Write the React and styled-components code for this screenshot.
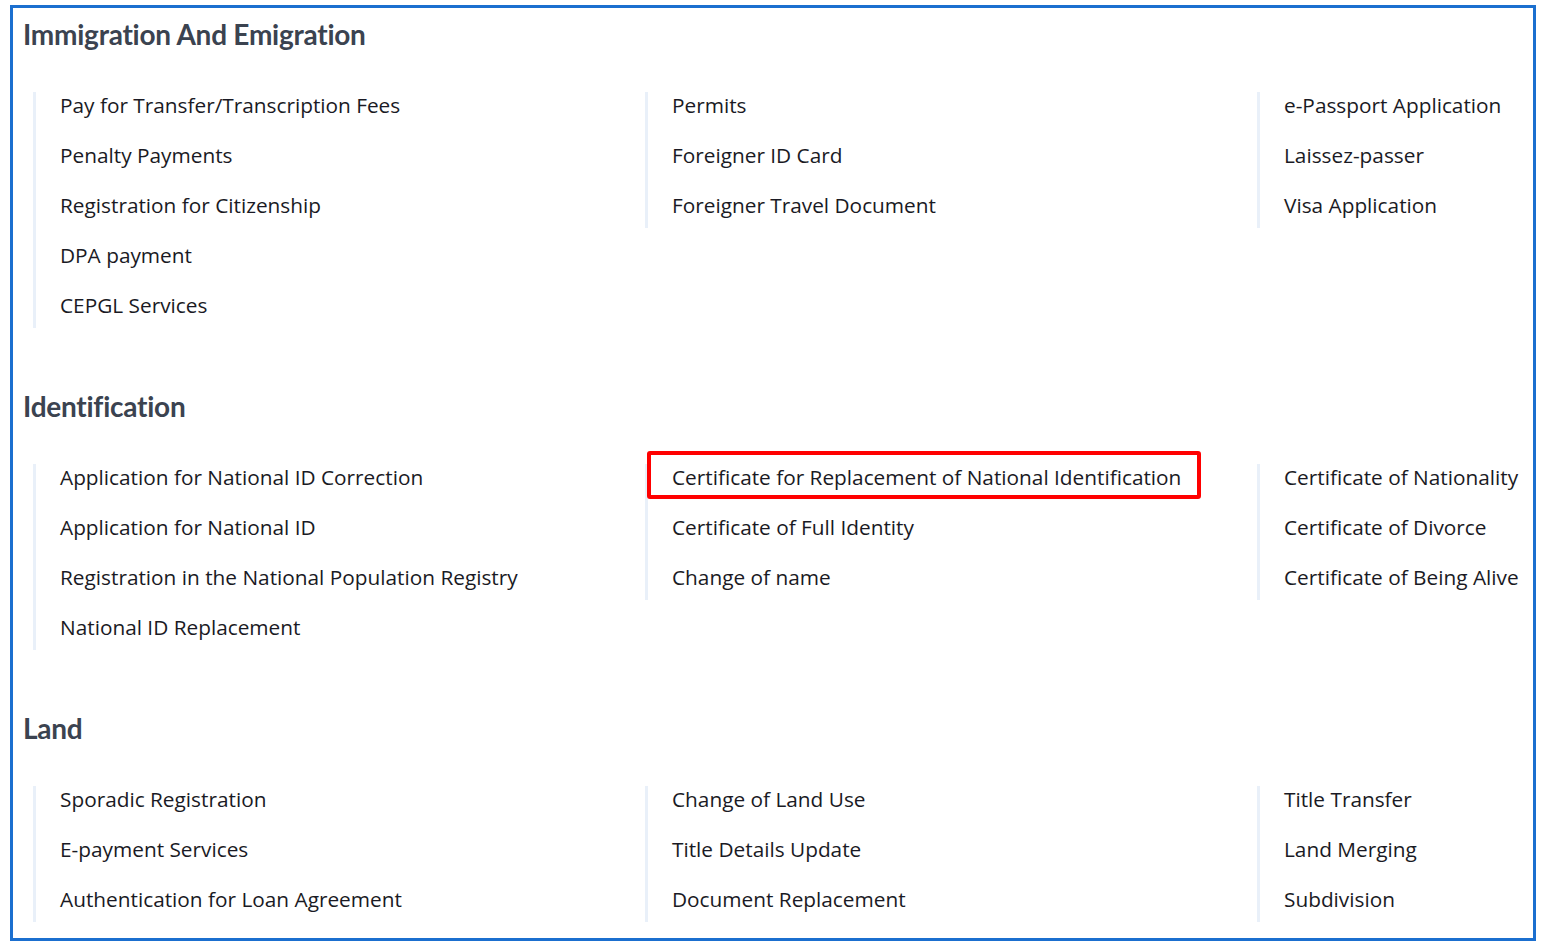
import styled, { createGlobalStyle } from "styled-components";

const GlobalStyle = createGlobalStyle`
  html, body {
    margin: 0;
    padding: 0;
    background: #fff;
  }
  body {
    font-family: "Open Sans", "Noto Sans", sans-serif;
  }
`;

const sections = [
  {
    title: "Immigration And Emigration",
    columns: [
      [
        "Pay for Transfer/Transcription Fees",
        "Penalty Payments",
        "Registration for Citizenship",
        "DPA payment",
        "CEPGL Services",
      ],
      ["Permits", "Foreigner ID Card", "Foreigner Travel Document"],
      ["e-Passport Application", "Laissez-passer", "Visa Application"],
    ],
  },
  {
    title: "Identification",
    columns: [
      [
        "Application for National ID Correction",
        "Application for National ID",
        "Registration in the National Population Registry",
        "National ID Replacement",
      ],
      [
        "Certificate for Replacement of National Identification",
        "Certificate of Full Identity",
        "Change of name",
      ],
      [
        "Certificate of Nationality",
        "Certificate of Divorce",
        "Certificate of Being Alive",
      ],
    ],
  },
  {
    title: "Land",
    columns: [
      [
        "Sporadic Registration",
        "E-payment Services",
        "Authentication for Loan Agreement",
      ],
      ["Change of Land Use", "Title Details Update", "Document Replacement"],
      ["Title Transfer", "Land Merging", "Subdivision"],
    ],
  },
];

const highlighted = "Certificate for Replacement of National Identification";

const Frame = styled.div`
  margin: 5px 5px 4px 10px;
  border: 3px solid #1b6fcf;
  padding: 9px 0 14px;
  overflow: hidden;
  height: 936px;
  box-sizing: border-box;
`;

const Section = styled.section`
  & + & {
    margin-top: 61px;
  }
`;

const Heading = styled.h2`
  margin: 0;
  padding-left: 10px;
  font-family: "Lato", "Open Sans", sans-serif;
  font-size: 28px;
  line-height: 34px;
  font-weight: 700;
  color: #3b4350;
  letter-spacing: -0.25px;
`;

const Columns = styled.div`
  display: grid;
  grid-template-columns: repeat(3, 612px);
  align-items: start;
  margin: 41px 0 0 20px;
`;

const List = styled.ul`
  list-style: none;
  margin: 0;
  padding: 0 0 10px 24px;
  border-left: 3px solid #e9f0f9;
  display: flex;
  flex-direction: column;
  gap: 24px;
`;

const Item = styled.li`
  font-size: 20.8px;
  line-height: 26px;
  color: #1a1a24;
  white-space: nowrap;
`;

const Marked = styled.span`
  position: relative;

  &::after {
    content: "";
    position: absolute;
    inset: -12px -20px -8px -25px;
    border: 4px solid #ff0000;
    border-radius: 3px;
  }
`;

function App() {
  return (
    <>
      <GlobalStyle />
      <Frame>
        {sections.map((section) => (
          <Section key={section.title}>
            <Heading>{section.title}</Heading>
            <Columns>
              {section.columns.map((items, i) => (
                <List key={i}>
                  {items.map((item) => (
                    <Item key={item}>
                      {item === highlighted ? <Marked>{item}</Marked> : item}
                    </Item>
                  ))}
                </List>
              ))}
            </Columns>
          </Section>
        ))}
      </Frame>
    </>
  );
}

export default App;
